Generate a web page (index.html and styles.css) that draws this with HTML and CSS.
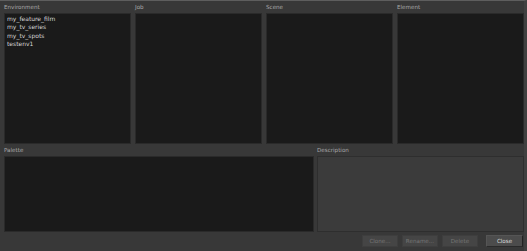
FILE: index.html
```html
<!DOCTYPE html>
<html>
<head>
<meta charset="utf-8">
<link rel="stylesheet" href="styles.css">
</head>
<body>
<div class="app">
  <div class="top">
    <div class="panel">
      <div class="label">Environment</div>
      <ul class="list">
        <li>my_feature_film</li>
        <li>my_tv_series</li>
        <li>my_tv_spots</li>
        <li>testenv1</li>
      </ul>
    </div>
    <div class="panel">
      <div class="label">Job</div>
      <ul class="list"></ul>
    </div>
    <div class="panel">
      <div class="label">Scene</div>
      <ul class="list"></ul>
    </div>
    <div class="panel">
      <div class="label">Element</div>
      <ul class="list"></ul>
    </div>
  </div>
  <div class="bottom">
    <div class="panel">
      <div class="label">Palette</div>
      <div class="palette-box"></div>
    </div>
    <div class="panel">
      <div class="label">Description</div>
      <div class="desc-box"></div>
    </div>
  </div>
  <div class="buttons">
    <button class="btn disabled">Clone...</button>
    <button class="btn disabled">Rename...</button>
    <button class="btn disabled">Delete</button>
    <button class="btn close">Close</button>
  </div>
</div>
</body>
</html>
```

FILE: styles.css
```css
html, body {
  margin: 0;
  padding: 0;
  background: #3a3a3a;
}
body {
  width: 527px;
  height: 251px;
  overflow: hidden;
  font-family: "DejaVu Sans", "Liberation Sans", sans-serif;
}
.app {
  box-sizing: border-box;
  height: 251px;
  border-top: 1px solid #5e5e5e;
  border-right: 3px solid #404040;
  background: #383838;
  padding-left: 4px;
  display: flex;
  flex-direction: column;
}
.top {
  display: grid;
  grid-template-columns: 127px 127px 127px 127px;
  column-gap: 4px;
}
.panel {
  display: flex;
  flex-direction: column;
}
.label {
  height: 12px;
  line-height: 12px;
  font-size: 5.6px;
  color: #a9a9a9;
  white-space: nowrap;
}
.list {
  list-style: none;
  margin: 0;
  padding: 1px 0 0 2px;
  height: 131px;
  box-sizing: border-box;
  background: #1a1a1a;
  border: 1px solid #2a2a2a;
}
.list li {
  font-size: 6px;
  line-height: 8.4px;
  color: #d6d6d6;
  white-space: nowrap;
}
.bottom {
  margin-top: 1px;
  display: grid;
  grid-template-columns: 310px 207px;
  column-gap: 3px;
}
.bottom .label {
  height: 11px;
  line-height: 11px;
}
.palette-box {
  height: 76px;
  box-sizing: border-box;
  background: #1a1a1a;
  border: 1px solid #2a2a2a;
}
.desc-box {
  height: 76px;
  box-sizing: border-box;
  background: #3b3b3b;
  border: 1px solid #2e2e2e;
}
.buttons {
  margin-top: 3px;
  display: flex;
  justify-content: flex-end;
  padding-right: 1px;
}
.btn {
  height: 12px;
  padding: 0;
  margin: 0 0 0 4px;
  font-family: "DejaVu Sans", "Liberation Sans", sans-serif;
  font-size: 5.6px;
  line-height: 10px;
  border: 1px solid #3e3e3e;
  background: #454545;
  color: #767676;
}
.btn.disabled {
  width: 36px;
}
.btn.close {
  width: 37px;
  margin-left: 8px;
  background: #4c4c4c;
  color: #dcdcdc;
  border: 1px solid #555;
  border-right: 1px solid #222;
  border-bottom: 1px solid #2a2a2a;
}
```
